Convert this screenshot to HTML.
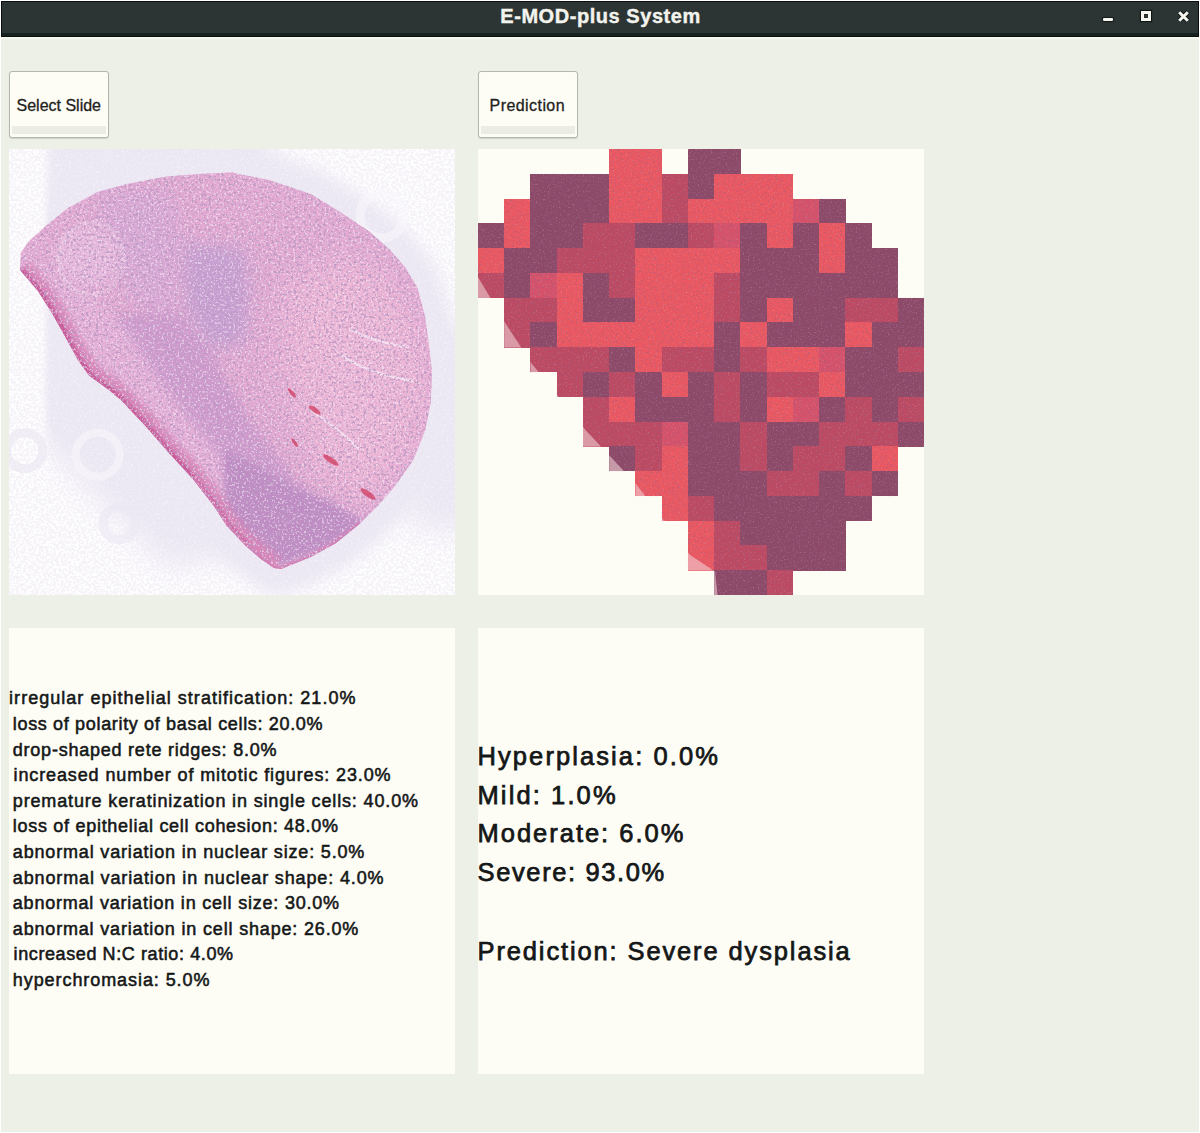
<!DOCTYPE html>
<html><head><meta charset="utf-8">
<style>
html,body{margin:0;padding:0;}
body{width:1200px;height:1133px;background:#ffffff;position:relative;overflow:hidden;font-family:"Liberation Sans",sans-serif;}
.win{position:absolute;left:1px;top:1px;width:1198px;height:1131px;background:#edf0e7;}
.t{position:absolute;white-space:pre;}
.btn{position:absolute;width:98px;height:65px;border:1px solid #b3b6ac;border-radius:3px;background:#fdfdf6;box-shadow:0 1px 1px rgba(0,0,0,0.12);}
.btn .strip{position:absolute;left:2px;right:2px;bottom:3px;height:8px;background:#ebede5;}
.panel{position:absolute;width:446px;height:446px;background:#fdfdf6;overflow:hidden;}
</style></head>
<body>
<div class="win">
  <div style="position:absolute;left:0;top:0;width:1196px;height:35px;background:#2c3533;border-top:1px solid #0a0f0e;border-left:1px solid #0a0f0e;border-right:1px solid #0a0f0e;"></div>
  <div style="position:absolute;left:1px;top:32px;width:1196px;height:3px;background:#172120;"></div><div style="position:absolute;left:0;top:35px;width:1198px;height:1px;background:#0d100e;"></div>
  <div style="position:absolute;left:0;top:36px;width:1198px;height:2px;background:#f4f6ee"></div>
  <div style="position:absolute;left:1102px;top:17px;width:10px;height:3px;background:#f6f6f0;border-radius:1px;box-shadow:0 0 1px 1px rgba(0,0,0,0.6)"></div>
  <div style="position:absolute;left:1140px;top:10px;width:4px;height:4px;border:3px solid #f6f6f0;box-shadow:0 0 1px 1px rgba(0,0,0,0.6), inset 0 0 1px 0 rgba(0,0,0,0.6)"></div>
  <svg style="position:absolute;left:1176px;top:8.6px" width="13" height="13" viewBox="0 0 13 13"><path d="M2.2 2.2L10.8 10.8M10.8 2.2L2.2 10.8" stroke="#050807" stroke-width="4.6" stroke-linecap="butt" opacity="0.7"/><path d="M2.2 2.2L10.8 10.8M10.8 2.2L2.2 10.8" stroke="#f6f6f0" stroke-width="3" stroke-linecap="butt"/></svg>
</div>
<div class="t" style="left:500.30px;top:6.07px;font-size:20px;line-height:20px;letter-spacing:0.550px;font-weight:bold;color:#f3f3ee;-webkit-text-stroke:0.4px #f3f3ee;">E-MOD-plus System</div>
<div class="btn" style="left:9px;top:71px"><div class="strip"></div></div>
<div class="btn" style="left:478px;top:71px"><div class="strip"></div></div>
<div class="t" style="left:16.50px;top:97.66px;font-size:16px;line-height:16px;letter-spacing:0.000px;font-weight:normal;color:#1e2220;-webkit-text-stroke:0.3px #1e2220;">Select Slide</div>
<div class="t" style="left:489.60px;top:97.66px;font-size:16px;line-height:16px;letter-spacing:0.427px;font-weight:normal;color:#1e2220;-webkit-text-stroke:0.3px #1e2220;">Prediction</div>
<div class="panel" style="left:9px;top:149px;background:#ebe7f3"><svg width="446" height="446" viewBox="0 0 446 446" style="position:absolute;left:0;top:0">
<defs>
<filter id="bl8" x="-50%" y="-50%" width="200%" height="200%"><feGaussianBlur stdDeviation="8"/></filter>
<filter id="bl5" x="-50%" y="-50%" width="200%" height="200%"><feGaussianBlur stdDeviation="5"/></filter>
<filter id="bl3" x="-50%" y="-50%" width="200%" height="200%"><feGaussianBlur stdDeviation="3"/></filter>
<filter id="bl1" x="-50%" y="-50%" width="200%" height="200%"><feGaussianBlur stdDeviation="1.2"/></filter>
<filter id="bl15" x="-50%" y="-50%" width="200%" height="200%"><feGaussianBlur stdDeviation="15"/></filter>
<filter id="bl20" x="-50%" y="-50%" width="200%" height="200%"><feGaussianBlur stdDeviation="20"/></filter>
<filter id="wspk" x="0" y="0" width="100%" height="100%"><feTurbulence type="fractalNoise" baseFrequency="0.4" numOctaves="3" seed="7"/><feColorMatrix type="matrix" values="0 0 0 0 1  0 0 0 0 1  0 0 0 0 1  7 0 0 0 -3.2"/></filter>
<filter id="wspk2" x="0" y="0" width="100%" height="100%"><feTurbulence type="fractalNoise" baseFrequency="0.45" numOctaves="3" seed="3"/><feColorMatrix type="matrix" values="0 0 0 0 1  0 0 0 0 0.95  0 0 0 0 1  8 0 0 0 -4.5"/></filter>
<filter id="pspk" x="0" y="0" width="100%" height="100%"><feTurbulence type="fractalNoise" baseFrequency="0.4" numOctaves="3" seed="11"/><feColorMatrix type="matrix" values="0 0 0 0 0.5  0 0 0 0 0.32  0 0 0 0 0.55  8 0 0 0 -4.3"/></filter>
<clipPath id="tis"><path d="M11.8,104.0 L19.7,92.5 L39.0,75.0 L59.0,59.0 L88.6,43.0 L118.0,35.0 L157.5,27.6 L197.0,24.6 L223.0,23.6 L262.0,31.5 L301.7,45.0 L331.0,63.0 L360.8,82.7 L380.5,100.4 L396.0,118.0 L408.0,137.8 L416.0,167.0 L420.0,197.0 L423.0,223.0 L421.8,252.5 L416.0,282.0 L404.0,311.6 L386.0,337.0 L368.7,356.9 L351.0,374.6 L327.0,394.0 L301.7,408.0 L272.0,420.0 L265.0,419.0 L252.0,410.0 L237.0,397.0 L218.0,377.0 L205.0,357.0 L184.0,330.0 L160.0,304.0 L137.0,277.5 L112.0,251.0 L100.0,241.0 L80.0,226.5 L69.0,211.0 L57.5,190.0 L43.0,164.0 L29.0,142.0 L11.0,121.0Z"/></clipPath>
<mask id="wm"><rect width="446" height="446" fill="#fff"/>
  <path d="M11.8,104.0 L19.7,92.5 L39.0,75.0 L59.0,59.0 L88.6,43.0 L118.0,35.0 L157.5,27.6 L197.0,24.6 L223.0,23.6 L262.0,31.5 L301.7,45.0 L331.0,63.0 L360.8,82.7 L380.5,100.4 L396.0,118.0 L408.0,137.8 L416.0,167.0 L420.0,197.0 L423.0,223.0 L421.8,252.5 L416.0,282.0 L404.0,311.6 L386.0,337.0 L368.7,356.9 L351.0,374.6 L327.0,394.0 L301.7,408.0 L272.0,420.0 L265.0,419.0 L252.0,410.0 L237.0,397.0 L218.0,377.0 L205.0,357.0 L184.0,330.0 L160.0,304.0 L137.0,277.5 L112.0,251.0 L100.0,241.0 L80.0,226.5 L69.0,211.0 L57.5,190.0 L43.0,164.0 L29.0,142.0 L11.0,121.0Z" fill="#000" stroke="#000" stroke-width="50" stroke-linejoin="round" filter="url(#bl8)"/>
  <path d="M0,130 L120,260 L240,400 L160,420 L40,300 L0,260Z" fill="#000" filter="url(#bl15)"/>
  <rect x="30" y="-30" width="230" height="90" fill="#000" filter="url(#bl15)"/>
  <rect x="400" y="180" width="80" height="200" fill="#000" filter="url(#bl15)"/>
  <rect x="-20" y="-20" width="57" height="490" fill="#fff" filter="url(#bl3)"/>
</mask>
</defs>
<rect width="446" height="446" fill="#ebe7f3"/>
<g mask="url(#wm)">
  <rect width="446" height="446" fill="#f5f3f8"/>
  <rect width="446" height="446" filter="url(#wspk)"/>
</g>
<rect width="446" height="446" filter="url(#wspk2)" opacity="0.35"/>
<g fill="none" opacity="0.6">
  <circle cx="88.6" cy="305.7" r="22" stroke="#f9f7fb" stroke-width="8"/>
  <circle cx="110" cy="374.6" r="16" stroke="#ebe7f3" stroke-width="9"/>
  <circle cx="15.7" cy="301.7" r="18" stroke="#ebe7f3" stroke-width="9"/>
  <circle cx="373" cy="67" r="22" stroke="#f9f7fb" stroke-width="9"/>
</g>
<path d="M11.8,104.0 L19.7,92.5 L39.0,75.0 L59.0,59.0 L88.6,43.0 L118.0,35.0 L157.5,27.6 L197.0,24.6 L223.0,23.6 L262.0,31.5 L301.7,45.0 L331.0,63.0 L360.8,82.7 L380.5,100.4 L396.0,118.0 L408.0,137.8 L416.0,167.0 L420.0,197.0 L423.0,223.0 L421.8,252.5 L416.0,282.0 L404.0,311.6 L386.0,337.0 L368.7,356.9 L351.0,374.6 L327.0,394.0 L301.7,408.0 L272.0,420.0 L265.0,419.0 L252.0,410.0 L237.0,397.0 L218.0,377.0 L205.0,357.0 L184.0,330.0 L160.0,304.0 L137.0,277.5 L112.0,251.0 L100.0,241.0 L80.0,226.5 L69.0,211.0 L57.5,190.0 L43.0,164.0 L29.0,142.0 L11.0,121.0Z" fill="#e2aad2"/>
<g clip-path="url(#tis)">
  <path d="M290.0,120.0 L360.0,110.0 L410.0,170.0 L420.0,240.0 L405.0,300.0 L370.0,340.0 L330.0,350.0 L300.0,300.0 L280.0,230.0 L275.0,160.0Z" fill="#ecb6d6" filter="url(#bl15)"/>
  <path d="M174.0,93.0 L236.0,100.0 L240.0,150.0 L236.0,195.0 L200.0,200.0 L176.0,160.0Z" fill="#c8a0d2" filter="url(#bl8)"/>
  <path d="M91.0,43.0 L163.0,40.0 L175.0,100.0 L163.0,173.0 L120.0,150.0 L95.0,100.0Z" fill="#d6a8d6" filter="url(#bl8)" opacity="0.7"/>
  <ellipse cx="79" cy="108" rx="32" ry="30" fill="#e6b8dc" filter="url(#bl5)"/>
  <path d="M0.0,95.0 L40.0,120.0 L90.0,150.0 L127.0,184.0 L163.0,223.0 L199.5,274.0 L236.0,321.0 L264.6,353.7 L293.5,382.7 L330.0,395.0 L351.0,374.6 L327.0,394.0 L301.7,408.0 L272.0,420.0 L265.0,419.0 L252.0,410.0 L237.0,397.0 L218.0,377.0 L205.0,357.0 L184.0,330.0 L160.0,304.0 L137.0,277.5 L112.0,251.0 L100.0,241.0 L80.0,226.5 L69.0,211.0 L57.5,190.0 L43.0,164.0 L29.0,142.0 L11.0,121.0Z" fill="#e4b0d8" filter="url(#bl5)"/>
  <path d="M105.0,165.0 L157.0,240.0 L223.0,323.0 L261.0,385.0 L300.0,405.0 L352.0,392.0 L356.0,370.0 L300.0,345.0 L281.0,323.0 L240.0,270.0 L223.0,240.0 L200.0,200.0 L170.0,165.0Z" fill="#c894ca" filter="url(#bl5)" opacity="0.7"/>
  <path d="M215.0,300.0 L250.0,318.0 L282.0,337.0 L320.0,352.0 L351.0,373.0 L330.0,392.0 L300.0,405.0 L275.0,416.0 L255.0,410.0 L235.0,390.0 L215.0,360.0Z" fill="#bf8cc4" filter="url(#bl3)"/>
  <path d="M11.0,121.0 L29.0,142.0 L43.0,164.0 L57.5,190.0 L69.0,211.0 L80.0,226.5 L100.0,241.0 L112.0,251.0 L137.0,277.5 L160.0,304.0 L184.0,330.0 L205.0,357.0 L218.0,377.0 L237.0,397.0 L252.0,410.0 L265.0,419.0" fill="none" stroke="#d884b8" stroke-width="26" filter="url(#bl3)"/>
  <path d="M11.0,121.0 L29.0,142.0 L43.0,164.0 L57.5,190.0 L69.0,211.0 L80.0,226.5 L100.0,241.0 L112.0,251.0 L137.0,277.5 L160.0,304.0 L184.0,330.0 L205.0,357.0 L218.0,377.0 L237.0,397.0" fill="none" stroke="#c85c98" stroke-width="8" filter="url(#bl1)"/>
  <path d="M184.0,330.0 L205.0,357.0 L218.0,377.0 L237.0,397.0 L252.0,410.0 L265.0,419.0 L272.0,420.0 L301.7,408.0 L327.0,394.0 L351.0,374.6" fill="none" stroke="#d27cb2" stroke-width="5" filter="url(#bl1)"/>
  <g fill="none" stroke="#f4e4f2" stroke-width="2.5" opacity="0.8">
    <path d="M340,180 Q370,195 400,198"/>
    <path d="M330,205 Q360,225 405,232"/>
    <path d="M300,260 Q330,280 350,300"/>
  </g>
  <ellipse cx="82" cy="110" rx="32" ry="36" fill="none" stroke="#f0dcee" stroke-width="4" opacity="0.35" filter="url(#bl1)"/>
  <rect width="446" height="446" filter="url(#pspk)" opacity="0.85"/>
  <rect width="446" height="446" filter="url(#wspk2)" opacity="0.45"/>
  <g fill="#d03458" opacity="0.7">
    <ellipse cx="283" cy="244" rx="6" ry="1.8" transform="rotate(50 283 244)"/>
    <ellipse cx="305.7" cy="261" rx="7" ry="2.5" transform="rotate(35 305.7 261)"/>
    <ellipse cx="285.7" cy="293.7" rx="5" ry="1.6" transform="rotate(55 285.7 293.7)"/>
    <ellipse cx="321.7" cy="311" rx="9" ry="2.8" transform="rotate(35 321.7 311)"/>
    <ellipse cx="359" cy="345" rx="9" ry="2.8" transform="rotate(35 359 345)"/>
  </g>
</g>
</svg></div>
<div class="panel" style="left:478px;top:149px;"><svg width="446" height="446" viewBox="0 0 446 446" style="position:absolute;left:0;top:0"><defs><filter id="hspk" x="0" y="0" width="100%" height="100%"><feTurbulence type="fractalNoise" baseFrequency="0.6" numOctaves="2" seed="5"/><feColorMatrix type="matrix" values="0 0 0 0 0.3  0 0 0 0 0.12  0 0 0 0 0.25  6 0 0 0 -3.4"/></filter><filter id="hspk2" x="0" y="0" width="100%" height="100%"><feTurbulence type="fractalNoise" baseFrequency="0.6" numOctaves="2" seed="9"/><feColorMatrix type="matrix" values="0 0 0 0 1  0 0 0 0 0.8  0 0 0 0 0.85  6 0 0 0 -3.6"/></filter><clipPath id="hclip"><rect x="131.18" y="0.0" width="26.54" height="25.08"/><rect x="157.41" y="0.0" width="26.54" height="25.08"/><rect x="209.88" y="0.0" width="26.54" height="25.08"/><rect x="236.12" y="0.0" width="26.54" height="25.08"/><rect x="52.47" y="24.78" width="26.54" height="25.08"/><rect x="78.71" y="24.78" width="26.54" height="25.08"/><rect x="104.94" y="24.78" width="26.54" height="25.08"/><rect x="131.18" y="24.78" width="26.54" height="25.08"/><rect x="157.41" y="24.78" width="26.54" height="25.08"/><rect x="183.65" y="24.78" width="26.54" height="25.08"/><rect x="209.88" y="24.78" width="26.54" height="25.08"/><rect x="236.12" y="24.78" width="26.54" height="25.08"/><rect x="262.35" y="24.78" width="26.54" height="25.08"/><rect x="288.59" y="24.78" width="26.54" height="25.08"/><rect x="26.24" y="49.56" width="26.54" height="25.08"/><rect x="52.47" y="49.56" width="26.54" height="25.08"/><rect x="78.71" y="49.56" width="26.54" height="25.08"/><rect x="104.94" y="49.56" width="26.54" height="25.08"/><rect x="131.18" y="49.56" width="26.54" height="25.08"/><rect x="157.41" y="49.56" width="26.54" height="25.08"/><rect x="183.65" y="49.56" width="26.54" height="25.08"/><rect x="209.88" y="49.56" width="26.54" height="25.08"/><rect x="236.12" y="49.56" width="26.54" height="25.08"/><rect x="262.35" y="49.56" width="26.54" height="25.08"/><rect x="288.59" y="49.56" width="26.54" height="25.08"/><rect x="314.82" y="49.56" width="26.54" height="25.08"/><rect x="341.06" y="49.56" width="26.54" height="25.08"/><rect x="0.0" y="74.33" width="26.54" height="25.08"/><rect x="26.24" y="74.33" width="26.54" height="25.08"/><rect x="52.47" y="74.33" width="26.54" height="25.08"/><rect x="78.71" y="74.33" width="26.54" height="25.08"/><rect x="104.94" y="74.33" width="26.54" height="25.08"/><rect x="131.18" y="74.33" width="26.54" height="25.08"/><rect x="157.41" y="74.33" width="26.54" height="25.08"/><rect x="183.65" y="74.33" width="26.54" height="25.08"/><rect x="209.88" y="74.33" width="26.54" height="25.08"/><rect x="236.12" y="74.33" width="26.54" height="25.08"/><rect x="262.35" y="74.33" width="26.54" height="25.08"/><rect x="288.59" y="74.33" width="26.54" height="25.08"/><rect x="314.82" y="74.33" width="26.54" height="25.08"/><rect x="341.06" y="74.33" width="26.54" height="25.08"/><rect x="367.29" y="74.33" width="26.54" height="25.08"/><rect x="0.0" y="99.11" width="26.54" height="25.08"/><rect x="26.24" y="99.11" width="26.54" height="25.08"/><rect x="52.47" y="99.11" width="26.54" height="25.08"/><rect x="78.71" y="99.11" width="26.54" height="25.08"/><rect x="104.94" y="99.11" width="26.54" height="25.08"/><rect x="131.18" y="99.11" width="26.54" height="25.08"/><rect x="157.41" y="99.11" width="26.54" height="25.08"/><rect x="183.65" y="99.11" width="26.54" height="25.08"/><rect x="209.88" y="99.11" width="26.54" height="25.08"/><rect x="236.12" y="99.11" width="26.54" height="25.08"/><rect x="262.35" y="99.11" width="26.54" height="25.08"/><rect x="288.59" y="99.11" width="26.54" height="25.08"/><rect x="314.82" y="99.11" width="26.54" height="25.08"/><rect x="341.06" y="99.11" width="26.54" height="25.08"/><rect x="367.29" y="99.11" width="26.54" height="25.08"/><rect x="393.53" y="99.11" width="26.54" height="25.08"/><rect x="0.0" y="123.89" width="26.54" height="25.08"/><rect x="26.24" y="123.89" width="26.54" height="25.08"/><rect x="52.47" y="123.89" width="26.54" height="25.08"/><rect x="78.71" y="123.89" width="26.54" height="25.08"/><rect x="104.94" y="123.89" width="26.54" height="25.08"/><rect x="131.18" y="123.89" width="26.54" height="25.08"/><rect x="157.41" y="123.89" width="26.54" height="25.08"/><rect x="183.65" y="123.89" width="26.54" height="25.08"/><rect x="209.88" y="123.89" width="26.54" height="25.08"/><rect x="236.12" y="123.89" width="26.54" height="25.08"/><rect x="262.35" y="123.89" width="26.54" height="25.08"/><rect x="288.59" y="123.89" width="26.54" height="25.08"/><rect x="314.82" y="123.89" width="26.54" height="25.08"/><rect x="341.06" y="123.89" width="26.54" height="25.08"/><rect x="367.29" y="123.89" width="26.54" height="25.08"/><rect x="393.53" y="123.89" width="26.54" height="25.08"/><rect x="26.24" y="148.67" width="26.54" height="25.08"/><rect x="52.47" y="148.67" width="26.54" height="25.08"/><rect x="78.71" y="148.67" width="26.54" height="25.08"/><rect x="104.94" y="148.67" width="26.54" height="25.08"/><rect x="131.18" y="148.67" width="26.54" height="25.08"/><rect x="157.41" y="148.67" width="26.54" height="25.08"/><rect x="183.65" y="148.67" width="26.54" height="25.08"/><rect x="209.88" y="148.67" width="26.54" height="25.08"/><rect x="236.12" y="148.67" width="26.54" height="25.08"/><rect x="262.35" y="148.67" width="26.54" height="25.08"/><rect x="288.59" y="148.67" width="26.54" height="25.08"/><rect x="314.82" y="148.67" width="26.54" height="25.08"/><rect x="341.06" y="148.67" width="26.54" height="25.08"/><rect x="367.29" y="148.67" width="26.54" height="25.08"/><rect x="393.53" y="148.67" width="26.54" height="25.08"/><rect x="419.76" y="148.67" width="26.54" height="25.08"/><rect x="26.24" y="173.44" width="26.54" height="25.08"/><rect x="52.47" y="173.44" width="26.54" height="25.08"/><rect x="78.71" y="173.44" width="26.54" height="25.08"/><rect x="104.94" y="173.44" width="26.54" height="25.08"/><rect x="131.18" y="173.44" width="26.54" height="25.08"/><rect x="157.41" y="173.44" width="26.54" height="25.08"/><rect x="183.65" y="173.44" width="26.54" height="25.08"/><rect x="209.88" y="173.44" width="26.54" height="25.08"/><rect x="236.12" y="173.44" width="26.54" height="25.08"/><rect x="262.35" y="173.44" width="26.54" height="25.08"/><rect x="288.59" y="173.44" width="26.54" height="25.08"/><rect x="314.82" y="173.44" width="26.54" height="25.08"/><rect x="341.06" y="173.44" width="26.54" height="25.08"/><rect x="367.29" y="173.44" width="26.54" height="25.08"/><rect x="393.53" y="173.44" width="26.54" height="25.08"/><rect x="419.76" y="173.44" width="26.54" height="25.08"/><rect x="52.47" y="198.22" width="26.54" height="25.08"/><rect x="78.71" y="198.22" width="26.54" height="25.08"/><rect x="104.94" y="198.22" width="26.54" height="25.08"/><rect x="131.18" y="198.22" width="26.54" height="25.08"/><rect x="157.41" y="198.22" width="26.54" height="25.08"/><rect x="183.65" y="198.22" width="26.54" height="25.08"/><rect x="209.88" y="198.22" width="26.54" height="25.08"/><rect x="236.12" y="198.22" width="26.54" height="25.08"/><rect x="262.35" y="198.22" width="26.54" height="25.08"/><rect x="288.59" y="198.22" width="26.54" height="25.08"/><rect x="314.82" y="198.22" width="26.54" height="25.08"/><rect x="341.06" y="198.22" width="26.54" height="25.08"/><rect x="367.29" y="198.22" width="26.54" height="25.08"/><rect x="393.53" y="198.22" width="26.54" height="25.08"/><rect x="419.76" y="198.22" width="26.54" height="25.08"/><rect x="78.71" y="223.0" width="26.54" height="25.08"/><rect x="104.94" y="223.0" width="26.54" height="25.08"/><rect x="131.18" y="223.0" width="26.54" height="25.08"/><rect x="157.41" y="223.0" width="26.54" height="25.08"/><rect x="183.65" y="223.0" width="26.54" height="25.08"/><rect x="209.88" y="223.0" width="26.54" height="25.08"/><rect x="236.12" y="223.0" width="26.54" height="25.08"/><rect x="262.35" y="223.0" width="26.54" height="25.08"/><rect x="288.59" y="223.0" width="26.54" height="25.08"/><rect x="314.82" y="223.0" width="26.54" height="25.08"/><rect x="341.06" y="223.0" width="26.54" height="25.08"/><rect x="367.29" y="223.0" width="26.54" height="25.08"/><rect x="393.53" y="223.0" width="26.54" height="25.08"/><rect x="419.76" y="223.0" width="26.54" height="25.08"/><rect x="104.94" y="247.78" width="26.54" height="25.08"/><rect x="131.18" y="247.78" width="26.54" height="25.08"/><rect x="157.41" y="247.78" width="26.54" height="25.08"/><rect x="183.65" y="247.78" width="26.54" height="25.08"/><rect x="209.88" y="247.78" width="26.54" height="25.08"/><rect x="236.12" y="247.78" width="26.54" height="25.08"/><rect x="262.35" y="247.78" width="26.54" height="25.08"/><rect x="288.59" y="247.78" width="26.54" height="25.08"/><rect x="314.82" y="247.78" width="26.54" height="25.08"/><rect x="341.06" y="247.78" width="26.54" height="25.08"/><rect x="367.29" y="247.78" width="26.54" height="25.08"/><rect x="393.53" y="247.78" width="26.54" height="25.08"/><rect x="419.76" y="247.78" width="26.54" height="25.08"/><rect x="104.94" y="272.56" width="26.54" height="25.08"/><rect x="131.18" y="272.56" width="26.54" height="25.08"/><rect x="157.41" y="272.56" width="26.54" height="25.08"/><rect x="183.65" y="272.56" width="26.54" height="25.08"/><rect x="209.88" y="272.56" width="26.54" height="25.08"/><rect x="236.12" y="272.56" width="26.54" height="25.08"/><rect x="262.35" y="272.56" width="26.54" height="25.08"/><rect x="288.59" y="272.56" width="26.54" height="25.08"/><rect x="314.82" y="272.56" width="26.54" height="25.08"/><rect x="341.06" y="272.56" width="26.54" height="25.08"/><rect x="367.29" y="272.56" width="26.54" height="25.08"/><rect x="393.53" y="272.56" width="26.54" height="25.08"/><rect x="419.76" y="272.56" width="26.54" height="25.08"/><rect x="131.18" y="297.33" width="26.54" height="25.08"/><rect x="157.41" y="297.33" width="26.54" height="25.08"/><rect x="183.65" y="297.33" width="26.54" height="25.08"/><rect x="209.88" y="297.33" width="26.54" height="25.08"/><rect x="236.12" y="297.33" width="26.54" height="25.08"/><rect x="262.35" y="297.33" width="26.54" height="25.08"/><rect x="288.59" y="297.33" width="26.54" height="25.08"/><rect x="314.82" y="297.33" width="26.54" height="25.08"/><rect x="341.06" y="297.33" width="26.54" height="25.08"/><rect x="367.29" y="297.33" width="26.54" height="25.08"/><rect x="393.53" y="297.33" width="26.54" height="25.08"/><rect x="157.41" y="322.11" width="26.54" height="25.08"/><rect x="183.65" y="322.11" width="26.54" height="25.08"/><rect x="209.88" y="322.11" width="26.54" height="25.08"/><rect x="236.12" y="322.11" width="26.54" height="25.08"/><rect x="262.35" y="322.11" width="26.54" height="25.08"/><rect x="288.59" y="322.11" width="26.54" height="25.08"/><rect x="314.82" y="322.11" width="26.54" height="25.08"/><rect x="341.06" y="322.11" width="26.54" height="25.08"/><rect x="367.29" y="322.11" width="26.54" height="25.08"/><rect x="393.53" y="322.11" width="26.54" height="25.08"/><rect x="183.65" y="346.89" width="26.54" height="25.08"/><rect x="209.88" y="346.89" width="26.54" height="25.08"/><rect x="236.12" y="346.89" width="26.54" height="25.08"/><rect x="262.35" y="346.89" width="26.54" height="25.08"/><rect x="288.59" y="346.89" width="26.54" height="25.08"/><rect x="314.82" y="346.89" width="26.54" height="25.08"/><rect x="341.06" y="346.89" width="26.54" height="25.08"/><rect x="367.29" y="346.89" width="26.54" height="25.08"/><rect x="209.88" y="371.67" width="26.54" height="25.08"/><rect x="236.12" y="371.67" width="26.54" height="25.08"/><rect x="262.35" y="371.67" width="26.54" height="25.08"/><rect x="288.59" y="371.67" width="26.54" height="25.08"/><rect x="314.82" y="371.67" width="26.54" height="25.08"/><rect x="341.06" y="371.67" width="26.54" height="25.08"/><rect x="209.88" y="396.44" width="26.54" height="25.08"/><rect x="236.12" y="396.44" width="26.54" height="25.08"/><rect x="262.35" y="396.44" width="26.54" height="25.08"/><rect x="288.59" y="396.44" width="26.54" height="25.08"/><rect x="314.82" y="396.44" width="26.54" height="25.08"/><rect x="341.06" y="396.44" width="26.54" height="25.08"/><rect x="236.12" y="421.22" width="26.54" height="25.08"/><rect x="262.35" y="421.22" width="26.54" height="25.08"/><rect x="288.59" y="421.22" width="26.54" height="25.08"/></clipPath></defs><g shape-rendering="crispEdges"><rect x="131.18" y="0.0" width="26.54" height="25.08" fill="#ea5862"/><rect x="157.41" y="0.0" width="26.54" height="25.08" fill="#ea5862"/><rect x="209.88" y="0.0" width="26.54" height="25.08" fill="#8c4a68"/><rect x="236.12" y="0.0" width="26.54" height="25.08" fill="#8c4a68"/><rect x="52.47" y="24.78" width="26.54" height="25.08" fill="#8c4a68"/><rect x="78.71" y="24.78" width="26.54" height="25.08" fill="#8c4a68"/><rect x="104.94" y="24.78" width="26.54" height="25.08" fill="#8c4a68"/><rect x="131.18" y="24.78" width="26.54" height="25.08" fill="#ea5862"/><rect x="157.41" y="24.78" width="26.54" height="25.08" fill="#ea5862"/><rect x="183.65" y="24.78" width="26.54" height="25.08" fill="#bc4a62"/><rect x="209.88" y="24.78" width="26.54" height="25.08" fill="#8c4a68"/><rect x="236.12" y="24.78" width="26.54" height="25.08" fill="#ea5862"/><rect x="262.35" y="24.78" width="26.54" height="25.08" fill="#ea5862"/><rect x="288.59" y="24.78" width="26.54" height="25.08" fill="#ea5862"/><rect x="26.24" y="49.56" width="26.54" height="25.08" fill="#ea5862"/><rect x="52.47" y="49.56" width="26.54" height="25.08" fill="#8c4a68"/><rect x="78.71" y="49.56" width="26.54" height="25.08" fill="#8c4a68"/><rect x="104.94" y="49.56" width="26.54" height="25.08" fill="#8c4a68"/><rect x="131.18" y="49.56" width="26.54" height="25.08" fill="#ea5862"/><rect x="157.41" y="49.56" width="26.54" height="25.08" fill="#ea5862"/><rect x="183.65" y="49.56" width="26.54" height="25.08" fill="#bc4a62"/><rect x="209.88" y="49.56" width="26.54" height="25.08" fill="#ea5862"/><rect x="236.12" y="49.56" width="26.54" height="25.08" fill="#ea5862"/><rect x="262.35" y="49.56" width="26.54" height="25.08" fill="#ea5862"/><rect x="288.59" y="49.56" width="26.54" height="25.08" fill="#ea5862"/><rect x="314.82" y="49.56" width="26.54" height="25.08" fill="#d6526a"/><rect x="341.06" y="49.56" width="26.54" height="25.08" fill="#8c4a68"/><rect x="0.0" y="74.33" width="26.54" height="25.08" fill="#8c4a68"/><rect x="26.24" y="74.33" width="26.54" height="25.08" fill="#ea5862"/><rect x="52.47" y="74.33" width="26.54" height="25.08" fill="#8c4a68"/><rect x="78.71" y="74.33" width="26.54" height="25.08" fill="#8c4a68"/><rect x="104.94" y="74.33" width="26.54" height="25.08" fill="#bc4a62"/><rect x="131.18" y="74.33" width="26.54" height="25.08" fill="#bc4a62"/><rect x="157.41" y="74.33" width="26.54" height="25.08" fill="#8c4a68"/><rect x="183.65" y="74.33" width="26.54" height="25.08" fill="#8c4a68"/><rect x="209.88" y="74.33" width="26.54" height="25.08" fill="#bc4a62"/><rect x="236.12" y="74.33" width="26.54" height="25.08" fill="#d6526a"/><rect x="262.35" y="74.33" width="26.54" height="25.08" fill="#8c4a68"/><rect x="288.59" y="74.33" width="26.54" height="25.08" fill="#ea5862"/><rect x="314.82" y="74.33" width="26.54" height="25.08" fill="#8c4a68"/><rect x="341.06" y="74.33" width="26.54" height="25.08" fill="#ea5862"/><rect x="367.29" y="74.33" width="26.54" height="25.08" fill="#8c4a68"/><rect x="0.0" y="99.11" width="26.54" height="25.08" fill="#ea5862"/><rect x="26.24" y="99.11" width="26.54" height="25.08" fill="#8c4a68"/><rect x="52.47" y="99.11" width="26.54" height="25.08" fill="#8c4a68"/><rect x="78.71" y="99.11" width="26.54" height="25.08" fill="#bc4a62"/><rect x="104.94" y="99.11" width="26.54" height="25.08" fill="#bc4a62"/><rect x="131.18" y="99.11" width="26.54" height="25.08" fill="#bc4a62"/><rect x="157.41" y="99.11" width="26.54" height="25.08" fill="#ea5862"/><rect x="183.65" y="99.11" width="26.54" height="25.08" fill="#ea5862"/><rect x="209.88" y="99.11" width="26.54" height="25.08" fill="#ea5862"/><rect x="236.12" y="99.11" width="26.54" height="25.08" fill="#ea5862"/><rect x="262.35" y="99.11" width="26.54" height="25.08" fill="#8c4a68"/><rect x="288.59" y="99.11" width="26.54" height="25.08" fill="#8c4a68"/><rect x="314.82" y="99.11" width="26.54" height="25.08" fill="#8c4a68"/><rect x="341.06" y="99.11" width="26.54" height="25.08" fill="#ea5862"/><rect x="367.29" y="99.11" width="26.54" height="25.08" fill="#8c4a68"/><rect x="393.53" y="99.11" width="26.54" height="25.08" fill="#8c4a68"/><rect x="0.0" y="123.89" width="26.54" height="25.08" fill="#bc4a62"/><rect x="26.24" y="123.89" width="26.54" height="25.08" fill="#8c4a68"/><rect x="52.47" y="123.89" width="26.54" height="25.08" fill="#d6526a"/><rect x="78.71" y="123.89" width="26.54" height="25.08" fill="#ea5862"/><rect x="104.94" y="123.89" width="26.54" height="25.08" fill="#8c4a68"/><rect x="131.18" y="123.89" width="26.54" height="25.08" fill="#bc4a62"/><rect x="157.41" y="123.89" width="26.54" height="25.08" fill="#ea5862"/><rect x="183.65" y="123.89" width="26.54" height="25.08" fill="#ea5862"/><rect x="209.88" y="123.89" width="26.54" height="25.08" fill="#ea5862"/><rect x="236.12" y="123.89" width="26.54" height="25.08" fill="#bc4a62"/><rect x="262.35" y="123.89" width="26.54" height="25.08" fill="#8c4a68"/><rect x="288.59" y="123.89" width="26.54" height="25.08" fill="#8c4a68"/><rect x="314.82" y="123.89" width="26.54" height="25.08" fill="#8c4a68"/><rect x="341.06" y="123.89" width="26.54" height="25.08" fill="#8c4a68"/><rect x="367.29" y="123.89" width="26.54" height="25.08" fill="#8c4a68"/><rect x="393.53" y="123.89" width="26.54" height="25.08" fill="#8c4a68"/><rect x="26.24" y="148.67" width="26.54" height="25.08" fill="#bc4a62"/><rect x="52.47" y="148.67" width="26.54" height="25.08" fill="#bc4a62"/><rect x="78.71" y="148.67" width="26.54" height="25.08" fill="#ea5862"/><rect x="104.94" y="148.67" width="26.54" height="25.08" fill="#8c4a68"/><rect x="131.18" y="148.67" width="26.54" height="25.08" fill="#8c4a68"/><rect x="157.41" y="148.67" width="26.54" height="25.08" fill="#ea5862"/><rect x="183.65" y="148.67" width="26.54" height="25.08" fill="#ea5862"/><rect x="209.88" y="148.67" width="26.54" height="25.08" fill="#ea5862"/><rect x="236.12" y="148.67" width="26.54" height="25.08" fill="#bc4a62"/><rect x="262.35" y="148.67" width="26.54" height="25.08" fill="#8c4a68"/><rect x="288.59" y="148.67" width="26.54" height="25.08" fill="#ea5862"/><rect x="314.82" y="148.67" width="26.54" height="25.08" fill="#8c4a68"/><rect x="341.06" y="148.67" width="26.54" height="25.08" fill="#8c4a68"/><rect x="367.29" y="148.67" width="26.54" height="25.08" fill="#bc4a62"/><rect x="393.53" y="148.67" width="26.54" height="25.08" fill="#bc4a62"/><rect x="419.76" y="148.67" width="26.54" height="25.08" fill="#8c4a68"/><rect x="26.24" y="173.44" width="26.54" height="25.08" fill="#bc4a62"/><rect x="52.47" y="173.44" width="26.54" height="25.08" fill="#8c4a68"/><rect x="78.71" y="173.44" width="26.54" height="25.08" fill="#ea5862"/><rect x="104.94" y="173.44" width="26.54" height="25.08" fill="#ea5862"/><rect x="131.18" y="173.44" width="26.54" height="25.08" fill="#ea5862"/><rect x="157.41" y="173.44" width="26.54" height="25.08" fill="#ea5862"/><rect x="183.65" y="173.44" width="26.54" height="25.08" fill="#ea5862"/><rect x="209.88" y="173.44" width="26.54" height="25.08" fill="#ea5862"/><rect x="236.12" y="173.44" width="26.54" height="25.08" fill="#8c4a68"/><rect x="262.35" y="173.44" width="26.54" height="25.08" fill="#ea5862"/><rect x="288.59" y="173.44" width="26.54" height="25.08" fill="#8c4a68"/><rect x="314.82" y="173.44" width="26.54" height="25.08" fill="#8c4a68"/><rect x="341.06" y="173.44" width="26.54" height="25.08" fill="#8c4a68"/><rect x="367.29" y="173.44" width="26.54" height="25.08" fill="#ea5862"/><rect x="393.53" y="173.44" width="26.54" height="25.08" fill="#8c4a68"/><rect x="419.76" y="173.44" width="26.54" height="25.08" fill="#8c4a68"/><rect x="52.47" y="198.22" width="26.54" height="25.08" fill="#bc4a62"/><rect x="78.71" y="198.22" width="26.54" height="25.08" fill="#bc4a62"/><rect x="104.94" y="198.22" width="26.54" height="25.08" fill="#bc4a62"/><rect x="131.18" y="198.22" width="26.54" height="25.08" fill="#8c4a68"/><rect x="157.41" y="198.22" width="26.54" height="25.08" fill="#ea5862"/><rect x="183.65" y="198.22" width="26.54" height="25.08" fill="#bc4a62"/><rect x="209.88" y="198.22" width="26.54" height="25.08" fill="#bc4a62"/><rect x="236.12" y="198.22" width="26.54" height="25.08" fill="#8c4a68"/><rect x="262.35" y="198.22" width="26.54" height="25.08" fill="#bc4a62"/><rect x="288.59" y="198.22" width="26.54" height="25.08" fill="#ea5862"/><rect x="314.82" y="198.22" width="26.54" height="25.08" fill="#ea5862"/><rect x="341.06" y="198.22" width="26.54" height="25.08" fill="#d6526a"/><rect x="367.29" y="198.22" width="26.54" height="25.08" fill="#8c4a68"/><rect x="393.53" y="198.22" width="26.54" height="25.08" fill="#8c4a68"/><rect x="419.76" y="198.22" width="26.54" height="25.08" fill="#bc4a62"/><rect x="78.71" y="223.0" width="26.54" height="25.08" fill="#bc4a62"/><rect x="104.94" y="223.0" width="26.54" height="25.08" fill="#8c4a68"/><rect x="131.18" y="223.0" width="26.54" height="25.08" fill="#bc4a62"/><rect x="157.41" y="223.0" width="26.54" height="25.08" fill="#8c4a68"/><rect x="183.65" y="223.0" width="26.54" height="25.08" fill="#ea5862"/><rect x="209.88" y="223.0" width="26.54" height="25.08" fill="#8c4a68"/><rect x="236.12" y="223.0" width="26.54" height="25.08" fill="#bc4a62"/><rect x="262.35" y="223.0" width="26.54" height="25.08" fill="#8c4a68"/><rect x="288.59" y="223.0" width="26.54" height="25.08" fill="#bc4a62"/><rect x="314.82" y="223.0" width="26.54" height="25.08" fill="#bc4a62"/><rect x="341.06" y="223.0" width="26.54" height="25.08" fill="#ea5862"/><rect x="367.29" y="223.0" width="26.54" height="25.08" fill="#8c4a68"/><rect x="393.53" y="223.0" width="26.54" height="25.08" fill="#8c4a68"/><rect x="419.76" y="223.0" width="26.54" height="25.08" fill="#8c4a68"/><rect x="104.94" y="247.78" width="26.54" height="25.08" fill="#bc4a62"/><rect x="131.18" y="247.78" width="26.54" height="25.08" fill="#ea5862"/><rect x="157.41" y="247.78" width="26.54" height="25.08" fill="#8c4a68"/><rect x="183.65" y="247.78" width="26.54" height="25.08" fill="#8c4a68"/><rect x="209.88" y="247.78" width="26.54" height="25.08" fill="#8c4a68"/><rect x="236.12" y="247.78" width="26.54" height="25.08" fill="#bc4a62"/><rect x="262.35" y="247.78" width="26.54" height="25.08" fill="#8c4a68"/><rect x="288.59" y="247.78" width="26.54" height="25.08" fill="#ea5862"/><rect x="314.82" y="247.78" width="26.54" height="25.08" fill="#d6526a"/><rect x="341.06" y="247.78" width="26.54" height="25.08" fill="#8c4a68"/><rect x="367.29" y="247.78" width="26.54" height="25.08" fill="#bc4a62"/><rect x="393.53" y="247.78" width="26.54" height="25.08" fill="#8c4a68"/><rect x="419.76" y="247.78" width="26.54" height="25.08" fill="#bc4a62"/><rect x="104.94" y="272.56" width="26.54" height="25.08" fill="#bc4a62"/><rect x="131.18" y="272.56" width="26.54" height="25.08" fill="#bc4a62"/><rect x="157.41" y="272.56" width="26.54" height="25.08" fill="#bc4a62"/><rect x="183.65" y="272.56" width="26.54" height="25.08" fill="#d6526a"/><rect x="209.88" y="272.56" width="26.54" height="25.08" fill="#8c4a68"/><rect x="236.12" y="272.56" width="26.54" height="25.08" fill="#8c4a68"/><rect x="262.35" y="272.56" width="26.54" height="25.08" fill="#bc4a62"/><rect x="288.59" y="272.56" width="26.54" height="25.08" fill="#8c4a68"/><rect x="314.82" y="272.56" width="26.54" height="25.08" fill="#8c4a68"/><rect x="341.06" y="272.56" width="26.54" height="25.08" fill="#bc4a62"/><rect x="367.29" y="272.56" width="26.54" height="25.08" fill="#bc4a62"/><rect x="393.53" y="272.56" width="26.54" height="25.08" fill="#bc4a62"/><rect x="419.76" y="272.56" width="26.54" height="25.08" fill="#8c4a68"/><rect x="131.18" y="297.33" width="26.54" height="25.08" fill="#8c4a68"/><rect x="157.41" y="297.33" width="26.54" height="25.08" fill="#bc4a62"/><rect x="183.65" y="297.33" width="26.54" height="25.08" fill="#ea5862"/><rect x="209.88" y="297.33" width="26.54" height="25.08" fill="#8c4a68"/><rect x="236.12" y="297.33" width="26.54" height="25.08" fill="#8c4a68"/><rect x="262.35" y="297.33" width="26.54" height="25.08" fill="#bc4a62"/><rect x="288.59" y="297.33" width="26.54" height="25.08" fill="#8c4a68"/><rect x="314.82" y="297.33" width="26.54" height="25.08" fill="#bc4a62"/><rect x="341.06" y="297.33" width="26.54" height="25.08" fill="#bc4a62"/><rect x="367.29" y="297.33" width="26.54" height="25.08" fill="#8c4a68"/><rect x="393.53" y="297.33" width="26.54" height="25.08" fill="#ea5862"/><rect x="157.41" y="322.11" width="26.54" height="25.08" fill="#ea5862"/><rect x="183.65" y="322.11" width="26.54" height="25.08" fill="#ea5862"/><rect x="209.88" y="322.11" width="26.54" height="25.08" fill="#8c4a68"/><rect x="236.12" y="322.11" width="26.54" height="25.08" fill="#8c4a68"/><rect x="262.35" y="322.11" width="26.54" height="25.08" fill="#8c4a68"/><rect x="288.59" y="322.11" width="26.54" height="25.08" fill="#bc4a62"/><rect x="314.82" y="322.11" width="26.54" height="25.08" fill="#bc4a62"/><rect x="341.06" y="322.11" width="26.54" height="25.08" fill="#8c4a68"/><rect x="367.29" y="322.11" width="26.54" height="25.08" fill="#bc4a62"/><rect x="393.53" y="322.11" width="26.54" height="25.08" fill="#8c4a68"/><rect x="183.65" y="346.89" width="26.54" height="25.08" fill="#ea5862"/><rect x="209.88" y="346.89" width="26.54" height="25.08" fill="#bc4a62"/><rect x="236.12" y="346.89" width="26.54" height="25.08" fill="#8c4a68"/><rect x="262.35" y="346.89" width="26.54" height="25.08" fill="#8c4a68"/><rect x="288.59" y="346.89" width="26.54" height="25.08" fill="#8c4a68"/><rect x="314.82" y="346.89" width="26.54" height="25.08" fill="#8c4a68"/><rect x="341.06" y="346.89" width="26.54" height="25.08" fill="#8c4a68"/><rect x="367.29" y="346.89" width="26.54" height="25.08" fill="#8c4a68"/><rect x="209.88" y="371.67" width="26.54" height="25.08" fill="#ea5862"/><rect x="236.12" y="371.67" width="26.54" height="25.08" fill="#bc4a62"/><rect x="262.35" y="371.67" width="26.54" height="25.08" fill="#8c4a68"/><rect x="288.59" y="371.67" width="26.54" height="25.08" fill="#8c4a68"/><rect x="314.82" y="371.67" width="26.54" height="25.08" fill="#8c4a68"/><rect x="341.06" y="371.67" width="26.54" height="25.08" fill="#8c4a68"/><rect x="209.88" y="396.44" width="26.54" height="25.08" fill="#ea5862"/><rect x="236.12" y="396.44" width="26.54" height="25.08" fill="#bc4a62"/><rect x="262.35" y="396.44" width="26.54" height="25.08" fill="#bc4a62"/><rect x="288.59" y="396.44" width="26.54" height="25.08" fill="#8c4a68"/><rect x="314.82" y="396.44" width="26.54" height="25.08" fill="#8c4a68"/><rect x="341.06" y="396.44" width="26.54" height="25.08" fill="#8c4a68"/><rect x="236.12" y="421.22" width="26.54" height="25.08" fill="#8c4a68"/><rect x="262.35" y="421.22" width="26.54" height="25.08" fill="#8c4a68"/><rect x="288.59" y="421.22" width="26.54" height="25.08" fill="#bc4a62"/></g><g clip-path="url(#hclip)"><rect width="446" height="446" filter="url(#hspk)" opacity="0.45"/><rect width="446" height="446" filter="url(#hspk2)" opacity="0.15"/><path d="M-5,125 L0,128 L27,173.6 L54,215 L108,281.5 L158,335 L212,406 L237,422.5 L240,450 L-5,450Z" fill="#f4d8dc" opacity="0.55"/></g></svg></div>
<div class="panel" style="left:9px;top:628px;"></div>
<div class="panel" style="left:478px;top:628px;"></div>
<div class="t" style="left:9.10px;top:689.36px;font-size:18px;line-height:18px;letter-spacing:1.030px;font-weight:normal;color:#151717;-webkit-text-stroke:0.55px #151717;">irregular epithelial stratification: 21.0%</div>
<div class="t" style="left:12.80px;top:714.96px;font-size:18px;line-height:18px;letter-spacing:0.663px;font-weight:normal;color:#151717;-webkit-text-stroke:0.55px #151717;">loss of polarity of basal cells: 20.0%</div>
<div class="t" style="left:12.80px;top:740.56px;font-size:18px;line-height:18px;letter-spacing:0.769px;font-weight:normal;color:#151717;-webkit-text-stroke:0.55px #151717;">drop-shaped rete ridges: 8.0%</div>
<div class="t" style="left:13.60px;top:766.16px;font-size:18px;line-height:18px;letter-spacing:0.874px;font-weight:normal;color:#151717;-webkit-text-stroke:0.55px #151717;">increased number of mitotic figures: 23.0%</div>
<div class="t" style="left:12.80px;top:791.76px;font-size:18px;line-height:18px;letter-spacing:0.848px;font-weight:normal;color:#151717;-webkit-text-stroke:0.55px #151717;">premature keratinization in single cells: 40.0%</div>
<div class="t" style="left:12.80px;top:817.36px;font-size:18px;line-height:18px;letter-spacing:0.711px;font-weight:normal;color:#151717;-webkit-text-stroke:0.55px #151717;">loss of epithelial cell cohesion: 48.0%</div>
<div class="t" style="left:12.80px;top:842.96px;font-size:18px;line-height:18px;letter-spacing:0.831px;font-weight:normal;color:#151717;-webkit-text-stroke:0.55px #151717;">abnormal variation in nuclear size: 5.0%</div>
<div class="t" style="left:12.80px;top:868.56px;font-size:18px;line-height:18px;letter-spacing:0.865px;font-weight:normal;color:#151717;-webkit-text-stroke:0.55px #151717;">abnormal variation in nuclear shape: 4.0%</div>
<div class="t" style="left:12.80px;top:894.16px;font-size:18px;line-height:18px;letter-spacing:0.788px;font-weight:normal;color:#151717;-webkit-text-stroke:0.55px #151717;">abnormal variation in cell size: 30.0%</div>
<div class="t" style="left:12.80px;top:919.76px;font-size:18px;line-height:18px;letter-spacing:0.824px;font-weight:normal;color:#151717;-webkit-text-stroke:0.55px #151717;">abnormal variation in cell shape: 26.0%</div>
<div class="t" style="left:13.60px;top:945.36px;font-size:18px;line-height:18px;letter-spacing:0.596px;font-weight:normal;color:#151717;-webkit-text-stroke:0.55px #151717;">increased N:C ratio: 4.0%</div>
<div class="t" style="left:12.80px;top:970.96px;font-size:18px;line-height:18px;letter-spacing:0.927px;font-weight:normal;color:#151717;-webkit-text-stroke:0.55px #151717;">hyperchromasia: 5.0%</div>
<div class="t" style="left:477.50px;top:743.71px;font-size:25.5px;line-height:25.5px;letter-spacing:2.090px;font-weight:normal;color:#151717;-webkit-text-stroke:0.75px #151717;">Hyperplasia: 0.0%</div>
<div class="t" style="left:477.50px;top:782.61px;font-size:25.5px;line-height:25.5px;letter-spacing:2.115px;font-weight:normal;color:#151717;-webkit-text-stroke:0.75px #151717;">Mild: 1.0%</div>
<div class="t" style="left:477.50px;top:821.41px;font-size:25.5px;line-height:25.5px;letter-spacing:1.986px;font-weight:normal;color:#151717;-webkit-text-stroke:0.75px #151717;">Moderate: 6.0%</div>
<div class="t" style="left:477.50px;top:859.61px;font-size:25.5px;line-height:25.5px;letter-spacing:1.627px;font-weight:normal;color:#151717;-webkit-text-stroke:0.75px #151717;">Severe: 93.0%</div>
<div class="t" style="left:477.50px;top:938.71px;font-size:25.5px;line-height:25.5px;letter-spacing:1.871px;font-weight:normal;color:#151717;-webkit-text-stroke:0.75px #151717;">Prediction: Severe dysplasia</div>
</body></html>
